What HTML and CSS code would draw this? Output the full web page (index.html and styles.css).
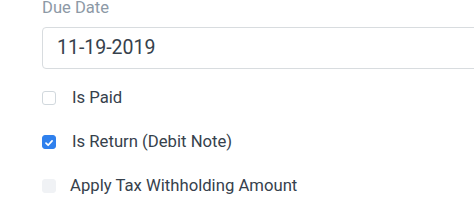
FILE: index.html
```html
<!DOCTYPE html>
<html>
<head>
<meta charset="utf-8">
<link rel="stylesheet" href="styles.css">
</head>
<body>
<div class="form">
  <div class="field">
    <label class="control-label">Due Date</label>
    <div class="input">11-19-2019</div>
  </div>
  <div class="checks">
    <label class="check"><span class="box"></span><span class="lbl">Is Paid</span></label>
    <label class="check"><span class="box checked"><svg viewBox="0 0 14 14" width="14" height="14"><path d="M3.5 7.2 L6 9.6 L10.6 4.6" fill="none" stroke="#fff" stroke-width="2" stroke-linecap="round" stroke-linejoin="round"/></svg></span><span class="lbl">Is Return (Debit Note)</span></label>
    <label class="check disabled"><span class="box"></span><span class="lbl">Apply Tax Withholding Amount</span></label>
  </div>
</div>
</body>
</html>
```
FILE: styles.css
```css
html, body {
  margin: 0;
  padding: 0;
  background: #fff;
}
body {
  font-family: Roboto, "Liberation Sans", sans-serif;
  color: #36414c;
}
.form {
  padding: 0 0 0 42px;
  overflow: hidden;
}
.field {
  display: flex;
  flex-direction: column;
}
.control-label {
  font-size: 16.6px;
  line-height: 16px;
  color: #8d99a6;
  height: 16px;
}
.input {
  margin-top: 11px;
  margin-right: -10px;
  height: 40px;
  border: 1px solid #d8dcdf;
  border-radius: 4px;
  font-size: 19.5px;
  line-height: 40px;
  padding-left: 14px;
  color: #36414c;
}
.checks {
  display: flex;
  flex-direction: column;
  margin-top: 19px;
  gap: 24px;
}
.check {
  display: flex;
  align-items: center;
  height: 20px;
  font-size: 16.7px;
}
.box {
  width: 14px;
  height: 14px;
  box-sizing: border-box;
  border: 1px solid #d1d8dd;
  border-radius: 3px;
  background: #fff;
  flex: none;
  display: flex;
}
.box.checked {
  background: #2f80ed;
  border-color: #2f80ed;
}
.lbl {
  margin-left: 16px;
  white-space: nowrap;
  line-height: 20px;
}
.check.disabled .box {
  background: #f0f2f5;
  border-color: #f0f2f5;
}
.check.disabled .lbl {
  margin-left: 14px;
}
```
